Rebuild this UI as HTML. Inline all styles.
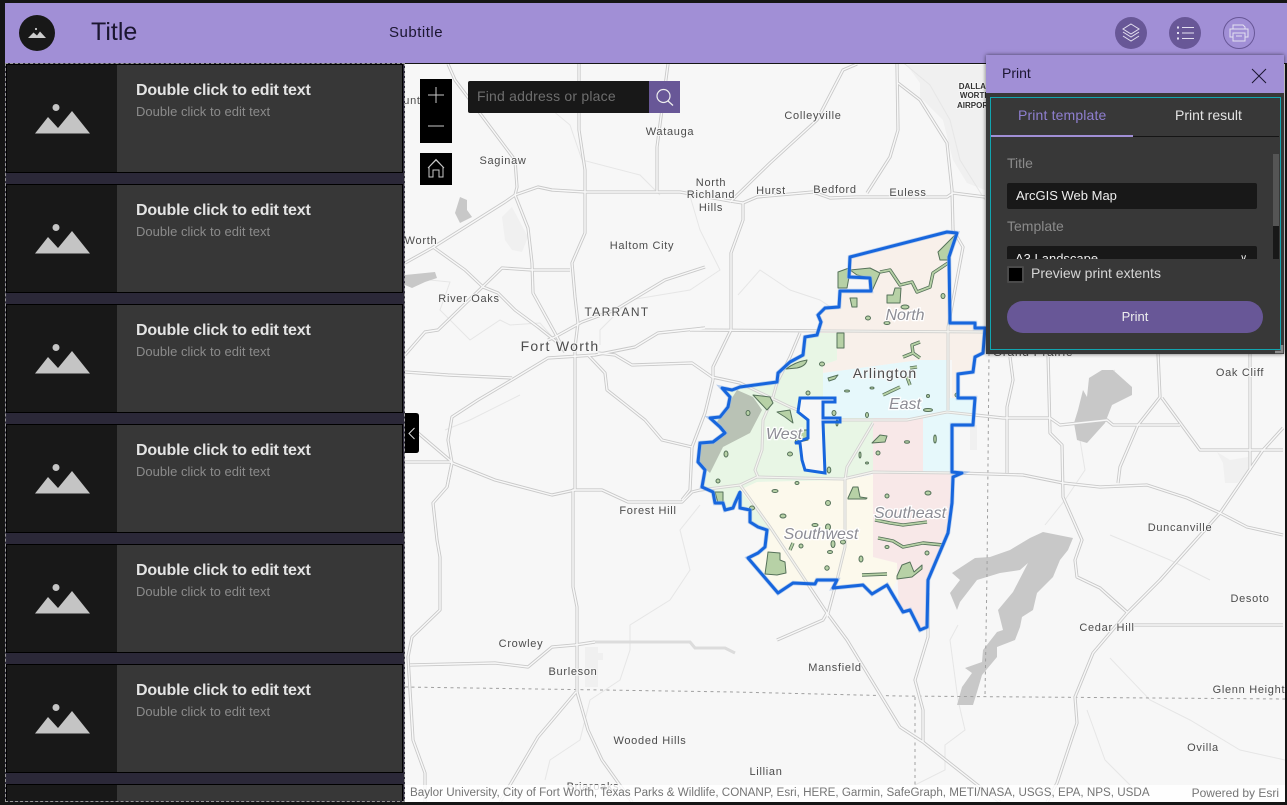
<!DOCTYPE html>
<html><head><meta charset="utf-8"><style>
html,body{margin:0;padding:0;width:1287px;height:805px;overflow:hidden;background:#151515;font-family:"Liberation Sans",sans-serif}
.a{position:absolute}
#side{left:5px;top:63px;width:400px;height:739px;background:#2b2838;overflow:hidden;outline:1px dashed #999;outline-offset:-1px}
.card{position:absolute;left:1px;width:395px;height:107px;background:#373737;border:1px solid #000}
.th{position:absolute;left:0;top:0;width:110px;height:107px;background:#181818}
.th svg{position:absolute;left:28px;top:39px}
.t1{position:absolute;left:129px;top:17px;font-size:16px;font-weight:bold;color:#e4e4e4;white-space:nowrap;letter-spacing:-.2px}
.t2{position:absolute;left:129px;top:39px;font-size:13px;color:#8b8b8b;white-space:nowrap;letter-spacing:.02px}
.c{fill:#4c4c4c;font-size:11px;letter-spacing:.7px;text-anchor:middle;paint-order:stroke;stroke:#f7f7f7;stroke-width:2px}
.d{fill:#8d8d95;font-size:16px;font-style:italic;text-anchor:middle;paint-order:stroke;stroke:#fff;stroke-width:2.5px}
.p{fill:#b7d1a6;stroke:#56725a;stroke-width:1;stroke-linejoin:round}
</style></head><body>
<div class="a" style="left:5px;top:3px;width:1282px;height:60px;background:#a18fd6"></div>
<svg class="a" style="left:19px;top:15px" width="36" height="36"><circle cx="18" cy="18" r="18" fill="#181818"/><circle cx="17" cy="14" r="1.100" fill="#ccc"/><path d="M9 23 14.500 17.500 18 20.500 21 16.500 27 23z" fill="#ccc"/></svg>
<div class="a" style="left:91px;top:18px;font-size:25px;color:#1b1630;white-space:nowrap">Title</div>
<div class="a" style="left:389px;top:24px;font-size:15px;letter-spacing:.5px;color:#1b1630;white-space:nowrap">Subtitle</div>
<svg class="a" style="left:1110px;top:12px" width="150" height="42" fill="none">
<circle cx="21" cy="21" r="16" fill="#685797"/><g stroke="#e4e0f0" stroke-width="1"><path d="M21 12 29 17 21 22 13 17z"/><path d="M13 20 21 25 29 20M13 24 21 29 29 24"/></g>
<circle cx="75" cy="21" r="16" fill="#685797"/><g stroke="#e4e0f0" stroke-width="1"><path d="M72 15.500H84M72 21H84M72 26.500H84"/><path d="M67 15.500H69M67 21H69M67 26.500H69" stroke-width="2"/></g>
<circle cx="129" cy="21" r="15.500" stroke="#685797"/><g stroke="#e4e0f0" stroke-width="1"><path d="M123 17V13H133L135 15V17M123 25H120V17H138V25H135"/><path d="M123 21H135V29H123zM126 24H132"/></g>
</svg>
<div class="a" id="side">
<div class="card" style="top:1px"><div class="th"><svg width="55" height="32" fill="#c4c4c4"><circle cx="21" cy="3.500" r="3.500"/><path d="M0 29.500 13 13 23 24 37 7 55 29.500z"/></svg></div><div class="t1">Double click to edit text</div><div class="t2">Double click to edit text</div></div>
<div class="card" style="top:121px"><div class="th"><svg width="55" height="32" fill="#c4c4c4"><circle cx="21" cy="3.500" r="3.500"/><path d="M0 29.500 13 13 23 24 37 7 55 29.500z"/></svg></div><div class="t1">Double click to edit text</div><div class="t2">Double click to edit text</div></div>
<div class="card" style="top:241px"><div class="th"><svg width="55" height="32" fill="#c4c4c4"><circle cx="21" cy="3.500" r="3.500"/><path d="M0 29.500 13 13 23 24 37 7 55 29.500z"/></svg></div><div class="t1">Double click to edit text</div><div class="t2">Double click to edit text</div></div>
<div class="card" style="top:361px"><div class="th"><svg width="55" height="32" fill="#c4c4c4"><circle cx="21" cy="3.500" r="3.500"/><path d="M0 29.500 13 13 23 24 37 7 55 29.500z"/></svg></div><div class="t1">Double click to edit text</div><div class="t2">Double click to edit text</div></div>
<div class="card" style="top:481px"><div class="th"><svg width="55" height="32" fill="#c4c4c4"><circle cx="21" cy="3.500" r="3.500"/><path d="M0 29.500 13 13 23 24 37 7 55 29.500z"/></svg></div><div class="t1">Double click to edit text</div><div class="t2">Double click to edit text</div></div>
<div class="card" style="top:601px"><div class="th"><svg width="55" height="32" fill="#c4c4c4"><circle cx="21" cy="3.500" r="3.500"/><path d="M0 29.500 13 13 23 24 37 7 55 29.500z"/></svg></div><div class="t1">Double click to edit text</div><div class="t2">Double click to edit text</div></div>
<div class="card" style="top:721px;height:16px;border-bottom:0"><div class="th" style="height:16px"></div></div>
</div>
<svg class="a" style="left:405px;top:64px" width="880" height="738" viewBox="405 64 880 738">
<defs>
<clipPath id="o"><path id="op" d="M957 233 947 232 850 257 849 277 870 278 871 291 840 291 839 307 825 308 818 315 821 322 817 335 805 337 803 355 790 362 778 373 777 382 740 387 732 390 722 388 730 397 728 407 720 417 710 418 720 427 725 433 713 442 700 443 698 462 705 470 702 487 713 492 715 503 723 503 725 510 733 508 735 503 740 492 740 508 750 510 750 522 758 527 767 530 765 547 758 553 748 558 778 593 793 583 815 584 817 580 837 580 833 588 863 585 872 594 887 585 903 612 910 610 920 630 927 627 928 580 948 533 952 503 953 477 962 473 952 472 952 425 973 425 975 398 958 398 958 374 973 372 975 357 983 353 985 328 975 328 975 323 950 323 949 257z"/></clipPath>
<g id="roads">
<path d="M405 263 432 248 505 202 515 195 538 187 552 190 585 192 655 192 680 192 730 201 743 203 757 197 813 192 830 198 857 197 947 197 953 193 985 197"/>
<path d="M448 64 455 80 515 160 517 187 515 195 528 228 532 263 533 293 555 333 565 352"/>
<path d="M579 64 579 130 585 170 585 233 572 263 575 297 578 323 575 347 575 490 573 490 573 587 577 607 577 692 588 730 602 760 632 802"/>
<path d="M576 692 538 737 500 802"/>
<path d="M668 64 657 147 657 192"/>
<path d="M743 203 743 220 731 253 731 330 713 367 713 380"/>
<path d="M692 447 705 413 713 380"/>
<path d="M730 202 770 163 817 120 843 70 857 64"/>
<path d="M897 64 898 130 890 157 867 193"/>
<path d="M898 83 920 100 947 143 952 190 953 230 963 247 948 327 948 410"/>
<path d="M705 328 658 333 635 347 595 355 548 358 515 378 478 400 452 417 448 440 452 463 447 487 433 503 437 540 440 557 440 610 412 637 408 657 413 740 425 773 425 802"/>
<path d="M405 372 448 375 512 378"/>
<path d="M690 330 990 332"/>
<path d="M705 328 690 330"/>
<path d="M588 355 605 373 607 390 645 420 662 440 692 447 690 490 682 500"/>
<path d="M598 353 615 355 632 365 692 363 712 377 740 383 790 407 823 420 907 420 947 412 1003 418 1050 418 1060 425 1107 420 1113 425 1180 425"/>
<path d="M405 462 450 462 495 480 552 495 575 490 602 490 628 502 682 502 692 492 700 490 740 485 757 477 843 479 873 472 957 473 1023 475 1063 483 1100 487 1147 485 1187 498 1220 513 1247 527 1283 535"/>
<path d="M418 433 452 462 447 487"/>
<path d="M405 355 425 332 438 330 502 268 532 270 570 270"/>
<path d="M433 247 465 270 483 287 498 293 515 310 538 327 558 343 565 352"/>
<path d="M705 267 665 280 615 310 582 322 555 337 548 340"/>
<path d="M740 485 770 527 827 613 847 640 900 727 923 742 980 787 1000 802"/>
<path d="M827 613 823 620 777 640"/>
<path d="M873 423 847 467 845 480 845 547 837 580 827 617"/>
<path d="M800 333 790 357 777 383 773 397 763 420 762 450 755 470 758 477"/>
<path d="M923 742 923 710 915 680 928 637 928 593"/>
<path d="M1010 357 1013 380 1007 407 1007 473"/>
<path d="M1048 353 1050 433 1062 445 1063 497 1082 540 1075 560 1077 577 1100 588 1128 613"/>
<path d="M1158 353 1160 397 1138 425 1120 467 1118 483"/>
<path d="M1162 398 1200 450 1283 450"/>
<path d="M1250 353 1250 470"/>
<path d="M1283 428 1263 450 1220 513 1160 580 1127 613 1093 653 1075 697 1077 723 1057 783 1047 802"/>
<path d="M1130 625 1283 625"/>
<path d="M410 665 495 663 528 667 552 647 575 645 595 642"/>
</g>
</defs>
<rect x="405" y="64" width="880" height="738" fill="#f7f7f7"/>
<g fill="#f0f0f0"><path d="M907 65H985V190L967 183 953 160 943 120 920 97 920 83z"/><path d="M502 217 512 207 528 237 522 252 512 250 505 240z"/><path d="M585 647H598V653H603V660H598V687H585z"/><path d="M1217 452 1230 460 1248 457V473L1237 483H1225L1223 463z"/><path d="M970 425H977V450H970z"/></g>
<g fill="none" stroke="#e6e6e6" stroke-width="1">
<path d="M540 100 570 125 582 160 640 175 660 195M690 196 700 230 720 270 690 290 630 300 600 330 600 345"/>
<path d="M430 280 450 282 440 310 470 340 500 320 510 325 540 323 555 340"/>
<path d="M445 430 470 420 520 395M700 505 680 530 690 570 670 600 630 625 630 650 620 680 590 700 580 740 550 760 545 780"/>
<path d="M1115 370 1100 385M1080 440 1085 470 1065 500 1045 525M1110 535 1170 560 1210 580M1110 658 1150 700 1190 720 1240 750 1285 760M1087 710 1105 760 1135 790"/>
<path d="M738 295 760 270 790 290 820 300 835 310 850 300M900 60 930 85 950 120 960 160 985 200"/>
<path d="M958 625 950 640 958 700 965 730 945 745 945 770 915 785"/>
</g>
<g fill="#c8c8c8">
<path d="M1102 370 1113 370 1132 387 1132 395 1112 405 1105 423 1087 443 1077 440 1074 423 1078 410 1083 390 1087 397 1089 378z"/>
<path d="M1043 532 1073 538 1068 550 1060 560 1053 577 1037 593 1033 610 1022 617 1020 627 1015 640 997 647 997 657 982 675 977 692 973 705 957 705 962 687 972 673 965 668 982 662 983 650 997 632 1003 630 998 610 1013 592 1028 563 1020 570 1000 573 977 580 960 602 957 610 950 593 960 580 952 573 975 558 990 557 1010 550 1030 538z"/>
<path d="M405 275 435 272 437 278 425 282 412 288 405 285z"/>
<path d="M460 197 467 200 467 210 472 217 460 223 455 213z"/>
</g>
<g fill="none" stroke-dasharray="3 3.500" stroke="#a0a0a0" stroke-width="1"><path d="M405 687 735 692 900 696 1285 699"/><path d="M989 353 987 573 985 696"/><path d="M915 697V787"/></g>
<use href="#roads" fill="none" stroke="#c9c9c9" stroke-width="3.200" stroke-linejoin="round"/>
<use href="#roads" fill="none" stroke="#f8f8f8" stroke-width="1.400" stroke-linejoin="round"/>
<path d="M595 642H690L695 648H725L735 653" fill="none" stroke="#dcdcdc" stroke-width="3"/>
<g clip-path="url(#o)">
<path d="M690 225H990V398H952V360H920L823 373 823 365 837 360V333H690z" fill="#f8f0ea"/>
<path d="M690 333H837V360L823 365V418H873V472L845 480 757 482 740 490 770 527 767 547 690 560z" fill="#e8f6e5"/>
<path d="M823 373 920 360H948V398H980V430H950V472H923V418H823z" fill="#e6f8fb"/>
<path d="M757 482 843 480 873 475V557L897 563V580L887 600 690 620 740 560 767 547 770 527 740 490z" fill="#fcf9ec"/>
<path d="M873 418H923V472H955V640H900L897 563 873 557z" fill="#f8e8e8"/>
<path d="M737 390 753 397 762 410 750 433 723 447 710 473 695 460 700 440 710 433z" fill="#b9c2b5"/>
<use href="#roads" fill="none" stroke="#d2d2d0" stroke-width="3"/>
<use href="#roads" fill="none" stroke="#f4f4f0" stroke-width="1.200"/>
</g>
<path d="M800 398H835V402H823V418H840V422H823L825 473 805 470 802 460 800 443 795 443 808 438V420L798 412z" fill="#f7f7f7"/>
<g fill="none" stroke="#56725a" stroke-width="3.400" stroke-linejoin="round">
<path d="M880 272 890 270 900 285 912 282 917 292 930 287 933 273 948 263"/>
<path d="M875 520 890 523 903 525 927 522"/><path d="M878 538 893 541 903 547 923 543 943 545"/><path d="M862 575 887 574"/>
<path d="M920 342 912 345 913 353 903 357M913 353 920 358M917 367 910 368M907 377 910 385"/><path d="M883 395 900 387"/><path d="M790 550 793 543"/>
</g>
<g fill="none" stroke="#b7d1a6" stroke-width="1.800" stroke-linejoin="round">
<path d="M880 272 890 270 900 285 912 282 917 292 930 287 933 273 948 263"/>
<path d="M875 520 890 523 903 525 927 522"/><path d="M878 538 893 541 903 547 923 543 943 545"/><path d="M862 575 887 574"/>
<path d="M920 342 912 345 913 353 903 357M913 353 920 358M917 367 910 368M907 377 910 385"/><path d="M883 395 900 387"/><path d="M790 550 793 543"/>
</g>
<g class="p">
<path d="M938 252 953 237 957 233 953 247 948 260 940 260z"/>
<path d="M838 272 849 268V277L847 288H838z"/>
<path d="M850 270 870 268 880 273 872 291 870 278 857 275z"/>
<path d="M887 295 893 295 895 288H901L900 303H887z"/>
<path d="M850 298H857V307H852z"/>
<path d="M837 333H844V348H837z"/>
<path d="M786 369Q795 362 807 360 806 366 797 368z"/>
<path d="M753 395 770 397 773 403 767 410z"/>
<path d="M777 412 790 410 793 423 785 417z"/>
<path d="M798 430H808V440L795 443z"/>
<path d="M872 443 880 435 887 436 885 442z"/>
<path d="M848 498 853 487H858L860 497 867 498 866 499H848z"/>
<path d="M768 552 780 553 780 560 785 562 786 573 777 575 765 574 767 560z"/>
<path d="M902 565 910 562 914 572 922 565 922 569 912 577 897 579 897 576z"/>
<ellipse cx="868" cy="318" rx="2.500" ry="2"/><ellipse cx="943" cy="296" rx="2" ry="2.500"/><ellipse cx="887" cy="323" rx="3" ry="1.500"/><ellipse cx="905" cy="307" rx="4" ry="2"/>
<ellipse cx="872" cy="388" rx="2" ry="1"/><ellipse cx="847" cy="391" rx="2.500" ry="1"/><ellipse cx="928" cy="396" rx="1.500" ry="1.500"/><ellipse cx="957" cy="395" rx="2" ry="2"/><ellipse cx="928" cy="410" rx="4.500" ry="1.500"/><ellipse cx="867" cy="415" rx="1.500" ry="2.500"/><ellipse cx="834" cy="413" rx="2" ry="2.500"/><ellipse cx="837" cy="423" rx="1" ry="3"/><ellipse cx="822" cy="364" rx="2.500" ry="2"/><path d="M828 378 838 375 835 379 829 381z"/><ellipse cx="808" cy="393" rx="2" ry="2"/><ellipse cx="748" cy="413" rx="2" ry="2.500"/>
<ellipse cx="878" cy="453" rx="2" ry="2"/><ellipse cx="887" cy="496" rx="2" ry="2"/><ellipse cx="928" cy="493" rx="3" ry="2"/><ellipse cx="907" cy="442" rx="2.500" ry="1.200"/><ellipse cx="935" cy="439" rx="1.300" ry="4"/><ellipse cx="860" cy="455" rx="1" ry="3"/><ellipse cx="867" cy="463" rx="1.500" ry="1"/><ellipse cx="829" cy="470" rx="1.800" ry="3"/><ellipse cx="790" cy="454" rx="2.500" ry="2"/><ellipse cx="726" cy="454" rx="2" ry="3"/><ellipse cx="718" cy="481" rx="2" ry="2"/><ellipse cx="797" cy="483" rx="2" ry="1.500"/><ellipse cx="775" cy="491" rx="3" ry="1.500"/><ellipse cx="828" cy="503" rx="2.500" ry="2.500"/><ellipse cx="783" cy="516" rx="3" ry="2"/><ellipse cx="801" cy="546" rx="2" ry="2"/><ellipse cx="827" cy="568" rx="2.200" ry="2.200"/><ellipse cx="830" cy="552" rx="2.500" ry="1.500"/><ellipse cx="833" cy="544" rx="2" ry="3.500"/><ellipse cx="861" cy="559" rx="2" ry="3"/><ellipse cx="752" cy="508" rx="2.500" ry="2"/><ellipse cx="815" cy="525" rx="3" ry="1.500"/><ellipse cx="828" cy="527" rx="2.500" ry="3"/><ellipse cx="843" cy="542" rx="2.500" ry="2"/><ellipse cx="887" cy="547" rx="2" ry="1.500"/><ellipse cx="927" cy="553" rx="2" ry="2"/>
<path d="M715 492H723V503H718z"/>
</g>
<use href="#op" fill="none" stroke="#8fb4e8" stroke-width="4.400" opacity=".6"/>
<use href="#op" fill="none" stroke="#1766dd" stroke-width="3" stroke-linejoin="round"/>
<path d="M800 398H835V402H823V418H840V422H823L825 473 805 470 802 460 800 443 795 443 808 438V420L798 412z" fill="none" stroke="#1766dd" stroke-width="3"/>
<g font-family="Liberation Sans,sans-serif">
<text class="c" x="813" y="119">Colleyville</text><text class="c" x="670" y="135">Watauga</text><text class="c" x="503" y="164">Saginaw</text>
<text class="c" x="711" y="186">North</text><text class="c" x="711" y="198">Richland</text><text class="c" x="711" y="211">Hills</text>
<text class="c" x="771" y="194">Hurst</text><text class="c" x="835" y="193">Bedford</text><text class="c" x="908" y="196">Euless</text>
<text class="c" x="642" y="249">Haltom City</text><text class="c" x="469" y="302">River Oaks</text>
<text class="c" x="617" y="316" style="font-size:12px;letter-spacing:1.300px">TARRANT</text>
<text class="c" x="560" y="351" style="font-size:14px;letter-spacing:1.300px">Fort Worth</text>
<text class="c" x="421" y="244">Worth</text><text class="c" x="412" y="104">unt</text>
<text class="c" x="885" y="378" style="font-size:14px;letter-spacing:1px">Arlington</text>
<text class="c" x="648" y="514">Forest Hill</text><text class="c" x="521" y="647">Crowley</text><text class="c" x="573" y="675">Burleson</text>
<text class="c" x="835" y="671">Mansfield</text><text class="c" x="650" y="744">Wooded Hills</text><text class="c" x="766" y="775">Lillian</text>
<text class="c" x="593" y="790">Briaroaks</text><text class="c" x="1107" y="631">Cedar Hill</text><text class="c" x="1180" y="531">Duncanville</text>
<text class="c" x="1240" y="376">Oak Cliff</text><text class="c" x="1250" y="602">Desoto</text><text class="c" x="1252" y="693">Glenn Heights</text>
<text class="c" x="1203" y="751">Ovilla</text><text class="c" x="1033" y="356" style="font-size:12px">Grand Prairie</text>
<text class="c" x="975" y="89" style="font-size:8px;font-weight:bold;letter-spacing:0;fill:#333">DALLAS</text>
<text class="c" x="975" y="98" style="font-size:8px;font-weight:bold;letter-spacing:0;fill:#333">WORTH</text>
<text class="c" x="975" y="108" style="font-size:8px;font-weight:bold;letter-spacing:0;fill:#333">AIRPORT</text>
<text class="d" x="905" y="320">North</text><text class="d" x="905" y="409">East</text><text class="d" x="784" y="439">West</text>
<text class="d" x="910" y="518">Southeast</text><text class="d" x="821" y="539">Southwest</text>
</g>
</svg>
<div class="a" style="left:405px;top:785px;width:880px;height:17px;background:rgba(255,255,255,.8)"></div>
<div class="a" style="left:410px;top:786px;font-size:11.650px;color:#757575;white-space:nowrap">Baylor University, City of Fort Worth, Texas Parks &amp; Wildlife, CONANP, Esri, HERE, Garmin, SafeGraph, METI/NASA, USGS, EPA, NPS, USDA</div>
<div class="a" style="right:8px;top:786px;font-size:12px;color:#757575;white-space:nowrap">Powered by Esri</div>
<div class="a" style="left:420px;top:79px;width:32px;height:64px;background:#000"></div>
<svg class="a" style="left:420px;top:79px" width="32" height="106" fill="none" stroke="#c8c8c8"><path d="M16 8V24M8 16H24M8 47H24"/><rect y="74" width="32" height="32" fill="#000" stroke="none"/><path d="M9 98V88L16 81 23 88V98H19V91H13V98zM8 89 16 80.500 24 89"/></svg>
<div class="a" style="left:468px;top:81px;width:181px;height:32px;background:#181818;border-radius:2px 0 0 2px;color:#6e6e6e;font-size:14px;letter-spacing:.2px;line-height:31px;text-indent:9px">Find address or place</div>
<svg class="a" style="left:649px;top:81px" width="31" height="32"><rect width="31" height="32" fill="#685797"/><circle cx="14.500" cy="15" r="6.500" fill="none" stroke="#eee" stroke-width="1.200"/><path d="M19 20 24 24.500" stroke="#eee" stroke-width="1.300"/></svg>
<svg class="a" style="left:405px;top:413px" width="14" height="40"><path d="M0 0H11Q14 0 14 3V37Q14 40 11 40H0z" fill="#000"/><path d="M9.500 15 4 20.500 9.500 26" fill="none" stroke="#ddd"/></svg>
<div class="a" style="left:986px;top:55px;width:298px;height:299px;background:#383838;box-shadow:0 0 4px rgba(0,0,0,.6)"></div>
<div class="a" style="left:986px;top:55px;width:298px;height:38px;background:#a18fd6"></div>
<div class="a" style="left:1002px;top:65px;font-size:14px;color:#1b1630">Print</div>
<svg class="a" style="left:1250px;top:67px" width="18" height="18"><path d="M2 2 16 16M16 2 2 16" stroke="#1b1630" fill="none"/></svg>
<div class="a" style="left:990px;top:97px;width:289px;height:251px;border:1px solid #12a5b0"></div>
<div class="a" style="left:991px;top:136px;width:288px;height:1px;background:#151515"></div>
<div class="a" style="left:991px;top:135px;width:142px;height:2px;background:#a18fd6"></div>
<div class="a" style="left:1018px;top:107px;font-size:14px;letter-spacing:.15px;color:#8f7fd0;white-space:nowrap">Print template</div>
<div class="a" style="left:1175px;top:107px;font-size:14px;color:#e4e4e4;white-space:nowrap">Print result</div>
<div class="a" style="left:1007px;top:155px;font-size:14px;color:#8b8b8b">Title</div>
<div class="a" style="left:1007px;top:183px;width:250px;height:26px;background:#181818;border-radius:2px;color:#eee;font-size:13px;line-height:25px;text-indent:9px">ArcGIS Web Map</div>
<div class="a" style="left:1007px;top:218px;font-size:14px;color:#8b8b8b">Template</div>
<div class="a" style="left:1007px;top:246px;width:250px;height:13px;background:#181818;border-radius:2px 2px 0 0;overflow:hidden;color:#eee;font-size:13px;line-height:25px;text-indent:8px">A3 Landscape<span class="a" style="left:233px;top:0;text-indent:0;font-size:10px">&#8744;</span></div>
<div class="a" style="left:1273px;top:154px;width:6px;height:72px;background:#555"></div>
<div class="a" style="left:1273px;top:226px;width:6px;height:33px;background:#181818"></div>
<div class="a" style="left:1007px;top:266px;width:13px;height:13px;background:#000;border:2px solid #4a4a4a;border-radius:1px"></div>
<div class="a" style="left:1031px;top:265px;font-size:14px;color:#d6d6d6;white-space:nowrap">Preview print extents</div>
<div class="a" style="left:1007px;top:301px;width:256px;height:32px;background:#685797;border-radius:16px;color:#eee;font-size:13px;line-height:31px;text-align:center">Print</div>
<svg class="a" style="left:1274px;top:344px" width="10" height="10"><path d="M8 1V8H1" fill="none" stroke="#8a8a8a" stroke-width="2.500"/></svg>
</body></html>
